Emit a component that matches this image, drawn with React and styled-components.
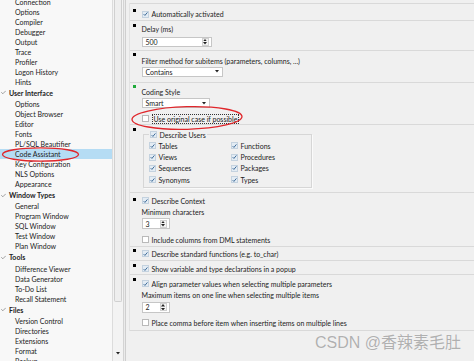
import React from "react";
import styled, { createGlobalStyle } from "styled-components";

const Global = createGlobalStyle`
  html, body { margin: 0; padding: 0; background: #f0f0f0; }
  * { box-sizing: border-box; }
`;

const FONT = `"Lato", "Open Sans", "Noto Sans CJK SC", sans-serif`;

const Window = styled.div`
  position: relative;
  width: 474px;
  height: 361px;
  display: flex;
  overflow: hidden;
  font-family: ${FONT};
  font-size: 7px;
  color: #222;
  background: #f0f0f0;
`;

const Sidebar = styled.div`
  width: 126px;
  flex: none;
  display: flex;
  background: #ebebeb;
  border-right: 1px solid #cfcfcf;
`;

const Tree = styled.div`
  width: 113px;
  flex: none;
  background: #f8f8f8;
  border-right: 1px solid #dcdcdc;
  overflow: hidden;
`;

const TreeList = styled.div`
  margin-top: -3.3px;
  display: flex;
  flex-direction: column;
`;

const TreeRow = styled.div`
  height: ${(p) => (p.$header ? 12.3 : 10)}px;
  flex: none;
  display: flex;
  align-items: center;
  gap: 3px;
  padding-left: ${(p) => (p.$header ? 1 : 15)}px;
  font-weight: ${(p) => (p.$header ? 700 : 400)};
  background: ${(p) => (p.$selected ? "#b5dcf4" : "transparent")};
  white-space: nowrap;
`;

const Chevron = () => (
  <svg width="5" height="5" viewBox="0 0 5 5">
    <polyline points="0.3,2.2 1.8,3.8 4.8,0.8" fill="none" stroke="#8a8a8a" strokeWidth="0.8" />
  </svg>
);

const Scrollbar = styled.div`
  width: 11px;
  flex: none;
  display: flex;
  flex-direction: column;
  background: #f3f3f3;
  border-right: 1px solid #d4d4d4;
`;

const Thumb = styled.div`
  height: 302px;
  margin: 0 1px;
  background: #eeeeee;
  border: 1px solid #d0d0d0;
  border-top: none;
  border-radius: 0 0 2px 2px;
`;

const Track = styled.div`
  flex: 1;
`;

const ArrowBtn = styled.div`
  height: 11px;
  display: flex;
  align-items: center;
  justify-content: center;
  margin-bottom: 2px;
`;

const Panel = styled.div`
  flex: 1;
  padding: 3px 0 0 3px;
  background: #f0f0f0;
`;

const Sections = styled.div`
  border-left: 1px solid #e2e2e2;
  display: flex;
  flex-direction: column;
`;

const Section = styled.div`
  height: ${(p) => p.$h}px;
  flex: none;
  display: flex;
  padding-top: ${(p) => p.$pt}px;
  border-top: 1px solid #d9d9d9;
  border-bottom: ${(p) => (p.$last ? "1px solid #d9d9d9" : "none")};
`;

const Bullet = styled.span`
  width: 3px;
  height: 3px;
  flex: none;
  margin: ${(p) => p.$bt}px 0 0 2.5px;
  background: ${(p) => (p.$green ? "#1faa3a" : "#000")};
`;

const Content = styled.div`
  margin-left: 6px;
  display: flex;
  flex-direction: column;
`;

const Row = styled.div`
  height: 10px;
  display: flex;
  align-items: center;
  gap: 3px;
  white-space: nowrap;
  margin-top: ${(p) => p.$mt || 0}px;
`;

const Label = styled.div`
  height: 10px;
  line-height: 10px;
  white-space: nowrap;
  margin-top: ${(p) => p.$mt || 0}px;
`;

const Box = styled.span`
  width: 7px;
  height: 7px;
  flex: none;
  display: flex;
  align-items: center;
  justify-content: center;
  background: ${(p) => (p.$checked ? "#e3ecf4" : "#fff")};
  border: 1px solid ${(p) => (p.$checked ? "#c4d2df" : "#b9b9b9")};
`;

const CheckBox = ({ checked }) => (
  <Box $checked={checked}>
    {checked && (
      <svg width="6" height="6" viewBox="0 0 6 6">
        <polyline points="0.8,3.2 2.3,4.7 5.3,1.1" fill="none" stroke="#2f5f8f" strokeWidth="1.1" />
      </svg>
    )}
  </Box>
);

const Focus = styled.span`
  border: 1px dotted #333;
  padding: 0 1px;
  line-height: 8px;
`;

const Field = styled.div`
  width: ${(p) => p.$w}px;
  height: ${(p) => p.$hgt || 10}px;
  margin-top: ${(p) => p.$mt || 0}px;
  background: #fff;
  border: 1px solid #c6c6c6;
  display: flex;
  align-items: center;
  justify-content: space-between;
  padding-left: 3px;
`;

const SpinBtns = styled.div`
  width: 7px;
  height: 8px;
  margin-right: 2px;
  display: flex;
  flex-direction: column;
  align-items: center;
  justify-content: center;
  gap: 1px;
  border: 1px solid #d0d0d0;
  background: #f4f4f4;
`;

const Caret = styled.span`
  margin-right: 3px;
  display: flex;
`;

const Tri = ({ up }) => (
  <svg width="4" height="2.5" viewBox="0 0 4 2.5">
    <polygon points={up ? "0,2.5 2,0 4,2.5" : "0,0 4,0 2,2.5"} fill="#222" />
  </svg>
);

const Spin = ({ value, w, hgt, mt }) => (
  <Field $w={w} $hgt={hgt} $mt={mt}>
    <span>{value}</span>
    <SpinBtns>
      <Tri up />
      <Tri />
    </SpinBtns>
  </Field>
);

const Select = ({ value, w, mt }) => (
  <Field $w={w} $mt={mt}>
    <span>{value}</span>
    <Caret>
      <svg width="4" height="2.5" viewBox="0 0 4 2.5">
        <polygon points="0,0 4,0 2,2.5" fill="#222" />
      </svg>
    </Caret>
  </Field>
);

const Group = styled.fieldset`
  width: 166px;
  margin: 1.5px 0 0 1px;
  padding: 0.5px 0 1.5px 5px;
  border: 1px solid #d6d6d6;
  box-shadow: 1px 1px 0 #fafafa;
`;

const Legend = styled.legend`
  padding: 0 1px;
  margin-left: 0;
  height: 10px;
  display: flex;
  align-items: center;
  gap: 3px;
`;

const GroupGrid = styled.div`
  display: grid;
  grid-template-columns: 82px 80px;
  grid-auto-rows: 11.4px;
  align-items: center;
`;

const GridItem = styled.div`
  display: flex;
  align-items: center;
  gap: 3px;
  white-space: nowrap;
`;

const Overlay = styled.svg`
  position: absolute;
  inset: 0;
  pointer-events: none;
`;

const Watermark = styled.div`
  position: absolute;
  right: 13px;
  top: 334px;
  font-family: "Liberation Sans", "Noto Sans CJK SC", sans-serif;
  font-size: 16px;
  line-height: 18px;
  color: #b0b0b0;
  text-shadow: 0 0 1px #fff;
  white-space: nowrap;
`;

const tree = [
  { t: "Connection" },
  { t: "Options" },
  { t: "Compiler" },
  { t: "Debugger" },
  { t: "Output" },
  { t: "Trace" },
  { t: "Profiler" },
  { t: "Logon History" },
  { t: "Hints" },
  { t: "User Interface", h: true },
  { t: "Options" },
  { t: "Object Browser" },
  { t: "Editor" },
  { t: "Fonts" },
  { t: "PL/SQL Beautifier" },
  { t: "Code Assistant", s: true },
  { t: "Key Configuration" },
  { t: "NLS Options" },
  { t: "Appearance" },
  { t: "Window Types", h: true },
  { t: "General" },
  { t: "Program Window" },
  { t: "SQL Window" },
  { t: "Test Window" },
  { t: "Plan Window" },
  { t: "Tools", h: true },
  { t: "Difference Viewer" },
  { t: "Data Generator" },
  { t: "To-Do List" },
  { t: "Recall Statement" },
  { t: "Files", h: true },
  { t: "Version Control" },
  { t: "Directories" },
  { t: "Extensions" },
  { t: "Format" },
  { t: "Backup" },
];

const groupItems = [
  "Tables", "Functions",
  "Views", "Procedures",
  "Sequences", "Packages",
  "Synonyms", "Types",
];

export default function App() {
  return (
    <>
      <Global />
      <Window>
        <Sidebar>
          <Tree>
            <TreeList>
              {tree.map((r, i) => (
                <TreeRow key={i} $header={r.h} $selected={r.s}>
                  {r.h && <Chevron />}
                  <span>{r.t}</span>
                </TreeRow>
              ))}
            </TreeList>
          </Tree>
          <Scrollbar>
            <Thumb />
            <Track />
            <ArrowBtn>
              <Tri />
            </ArrowBtn>
          </Scrollbar>
        </Sidebar>
        <Panel>
          <Sections>
            <Section $h={17} $pt={5.3}>
              <Bullet $bt={0.2} />
              <Content>
                <Row>
                  <CheckBox checked />
                  <span>Automatically activated</span>
                </Row>
              </Content>
            </Section>
            <Section $h={30} $pt={3.3}>
              <Bullet $bt={-0.8} />
              <Content>
                <Label>Delay (ms)</Label>
                <Spin value="500" w={70} mt={2.4} />
              </Content>
            </Section>
            <Section $h={32} $pt={5}>
              <Bullet $bt={-3.2} />
              <Content>
                <Label>Filter method for subitems (parameters, columns, ...)</Label>
                <Select value="Contains" w={81} mt={0.7} />
              </Content>
            </Section>
            <Section $h={42} $pt={3.7}>
              <Bullet $green $bt={-1.7} />
              <Content>
                <Label>Coding Style</Label>
                <Select value="Smart" w={68} mt={1.8} />
                <Row $mt={5.3}>
                  <CheckBox />
                  <Focus>Use original case if possible</Focus>
                </Row>
              </Content>
            </Section>
            <Section $h={68} $pt={3}>
              <Bullet $bt={0} />
              <Content>
                <Group>
                  <Legend>
                    <CheckBox checked />
                    <span>Describe Users</span>
                  </Legend>
                  <GroupGrid>
                    {groupItems.map((g) => (
                      <GridItem key={g}>
                        <CheckBox checked />
                        <span>{g}</span>
                      </GridItem>
                    ))}
                  </GroupGrid>
                </Group>
              </Content>
            </Section>
            <Section $h={53.7} $pt={2.7}>
              <Bullet $bt={2.1} />
              <Content>
                <Row>
                  <CheckBox checked />
                  <span>Describe Context</span>
                </Row>
                <Label $mt={1.6}>Minimum characters</Label>
                <Spin value="3" w={28} hgt={11} mt={1} />
                <Row $mt={5.7}>
                  <CheckBox />
                  <span>Include columns from DML statements</span>
                </Row>
              </Content>
            </Section>
            <Section $h={14.3} $pt={2.3}>
              <Bullet $bt={0.2} />
              <Content>
                <Row>
                  <CheckBox checked />
                  <span>Describe standard functions (e.g. to_char)</span>
                </Row>
              </Content>
            </Section>
            <Section $h={14.5} $pt={3}>
              <Bullet $bt={0.5} />
              <Content>
                <Row>
                  <CheckBox checked />
                  <span>Show variable and type declarations in a popup</span>
                </Row>
              </Content>
            </Section>
            <Section $h={56.5} $pt={3.5} $last>
              <Bullet $bt={-1.2} />
              <Content>
                <Row>
                  <CheckBox checked />
                  <span>Align parameter values when selecting multiple parameters</span>
                </Row>
                <Label $mt={1}>Maximum items on one line when selecting multiple items</Label>
                <Spin value="2" w={28} hgt={11} mt={1.7} />
                <Row $mt={5}>
                  <CheckBox />
                  <span>Place comma before item when inserting items on multiple lines</span>
                </Row>
              </Content>
            </Section>
          </Sections>
        </Panel>
        <Overlay width="474" height="361" viewBox="0 0 474 361">
          <ellipse cx="40.5" cy="154.5" rx="38" ry="6.7" fill="none" stroke="#e0262b" strokeWidth="1.3" />
          <ellipse cx="187" cy="118" rx="55" ry="11.3" fill="none" stroke="#e0262b" strokeWidth="1.3" transform="rotate(-1.5 187 118)" />
        </Overlay>
        <Watermark>CSDN @香辣素毛肚</Watermark>
      </Window>
    </>
  );
}
